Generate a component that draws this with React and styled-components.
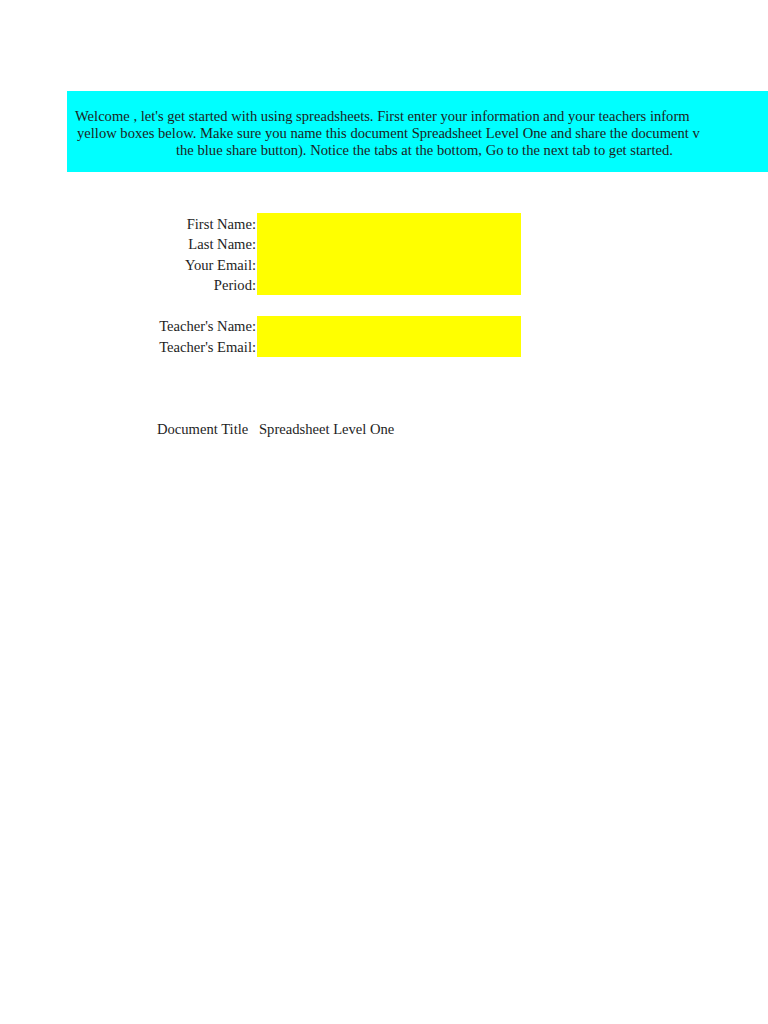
import React from 'react'
import styled, { createGlobalStyle } from 'styled-components'

const rows = [
  { label: '', value: '', fill: false },
  { label: '', value: '', fill: false },
  { label: 'First Name:', value: '', fill: true },
  { label: 'Last Name:', value: '', fill: true },
  { label: 'Your Email:', value: '', fill: true },
  { label: 'Period:', value: '', fill: true },
  { label: '', value: '', fill: false },
  { label: "Teacher's Name:", value: '', fill: true },
  { label: "Teacher's Email:", value: '', fill: true },
  { label: '', value: '', fill: false },
  { label: '', value: '', fill: false },
  { label: '', value: '', fill: false },
  { label: 'Document Title', value: 'Spreadsheet Level One', fill: false, left: true },
]

const App = () => {
  return (
    <>
      <GlobalStyle />
      <Page>
        {/* 안내 배너 */}
        <Banner>
          <BannerClip>
            <Line $indent={8}>
              Welcome , let's get started with using spreadsheets. First enter your information and your teachers inform
            </Line>
            <Line $indent={10}>
              yellow boxes below. Make sure you name this document Spreadsheet Level One and share the document v
            </Line>
            <Line $indent={109}>
              the blue share button). Notice the tabs at the bottom, Go to the next tab to get started.
            </Line>
          </BannerClip>
        </Banner>

        {/* 입력 시트 */}
        <Sheet>
          {rows.map((row, i) => (
            <React.Fragment key={i}>
              <Cell />
              <LabelCell $left={row.left}>{row.label}</LabelCell>
              <ValueCell $fill={row.fill}>{row.value}</ValueCell>
            </React.Fragment>
          ))}
        </Sheet>
      </Page>
    </>
  )
}

export default App

// * Global
const GlobalStyle = createGlobalStyle`
  html, body {
    margin: 0;
    padding: 0;
    background: #ffffff;
  }
  body {
    font-family: "Liberation Serif", "DejaVu Serif", serif;
    color: #1e1e1e;
  }
`

// * Wrap
const Page = styled.main`
  width: 768px;
  min-height: 1024px;
  padding: 91px 0 0 67px;
  box-sizing: border-box;
  overflow: hidden;
`

// * Banner
const Banner = styled.div`
  height: 81px;
  background-color: #00ffff;
  box-sizing: border-box;
  padding-top: 17px;
`

const BannerClip = styled.div`
  width: 634px;
  overflow: hidden;
  font-size: 14.6px;
  line-height: 17px;
`

const Line = styled.div`
  padding-left: ${(p) => p.$indent}px;
  white-space: nowrap;
`

// * Sheet
const Sheet = styled.div`
  display: grid;
  grid-template-columns: 88px 102px 264px;
  grid-auto-rows: 20.5px;
  font-size: 14.6px;
  line-height: 17px;
`

const Cell = styled.div``

const LabelCell = styled.div`
  display: flex;
  align-items: flex-end;
  justify-content: ${(p) => (p.$left ? 'flex-start' : 'flex-end')};
  padding: ${(p) => (p.$left ? '0 0 1px 2px' : '0 1px 1px 0')};
  white-space: nowrap;
`

const ValueCell = styled.div`
  display: flex;
  align-items: flex-end;
  padding: 0 0 1px 2px;
  white-space: nowrap;
  background-color: ${(p) => (p.$fill ? '#ffff00' : 'transparent')};
`
